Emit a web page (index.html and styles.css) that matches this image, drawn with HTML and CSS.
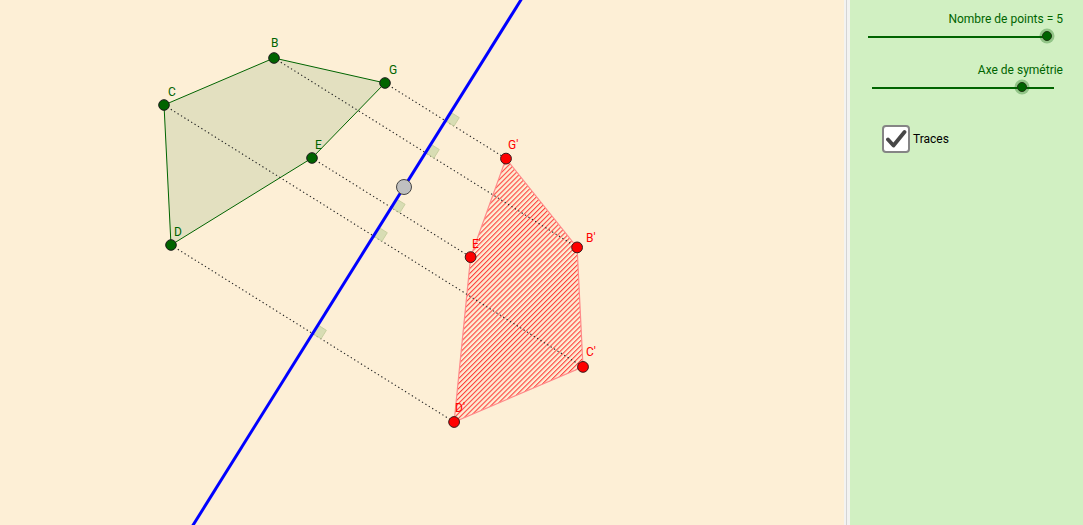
FILE: index.html
```html
<!DOCTYPE html>
<html lang="fr">
<head>
<meta charset="utf-8">
<title>Symétrie axiale</title>
<link rel="stylesheet" href="styles.css">
</head>
<body>
<div class="app">
  <div class="canvas">
    <svg class="geo" width="844" height="525" viewBox="0 0 844 525" xmlns="http://www.w3.org/2000/svg">
      <defs>
        <pattern id="hatch" width="3.5" height="10" patternUnits="userSpaceOnUse" patternTransform="rotate(45)">
          <line x1="0.6" y1="-1" x2="0.6" y2="11" stroke="#ff1a1a" stroke-width="0.9"/>
        </pattern>
      </defs>
      <!-- original polygon -->
      <polygon points="164,105 274,58 385,83 312,158 171,245" fill="#006400" fill-opacity="0.1" stroke="#006400" stroke-width="1"/>
      <!-- image polygon -->
      <polygon points="506,158.6 577.1,247.4 583,366.9 454.1,422 470.6,257.1" fill="url(#hatch)" stroke="#ff8a8a" stroke-width="1.2"/>
      <!-- perpendicular dotted lines -->
      <g stroke="#222" stroke-width="1.1" stroke-dasharray="1.3 2.7" fill="none">
        <line x1="274" y1="58" x2="577.1" y2="247.4"/>
        <line x1="385" y1="83" x2="506" y2="158.6"/>
        <line x1="164" y1="105" x2="583" y2="366.9"/>
        <line x1="312" y1="158" x2="470.6" y2="257.1"/>
        <line x1="171" y1="245" x2="454.1" y2="422"/>
      </g>
      <!-- right-angle markers -->
      <g fill="#d6dbb2" fill-opacity="0.95" stroke="#c0ca98" stroke-width="0.8">
        <polygon points="445.5,120.8 450.8,112.3 459.3,117.6 454.0,126.1"/>
        <polygon points="425.5,152.7 430.8,144.2 439.3,149.5 434.0,158.0"/>
        <polygon points="391.3,207.5 396.6,199.0 405.1,204.3 399.8,212.8"/>
        <polygon points="373.5,235.9 378.8,227.4 387.3,232.7 382.0,241.2"/>
        <polygon points="312.6,333.5 317.9,325.0 326.4,330.3 321.1,338.8"/>
      </g>
      <!-- axis -->
      <line x1="521.5" y1="-1" x2="192.5" y2="526" stroke="#0000ff" stroke-width="3"/>
      <circle cx="404" cy="187" r="7.5" fill="#c0c0c0" stroke="#444" stroke-width="1"/>
      <!-- original points -->
      <g fill="#006400" stroke="#1a1a1a" stroke-width="1">
        <circle cx="274" cy="58" r="5.3"/>
        <circle cx="385" cy="83" r="5.3"/>
        <circle cx="164" cy="105" r="5.3"/>
        <circle cx="312" cy="158" r="5.3"/>
        <circle cx="171" cy="245" r="5.3"/>
      </g>
      <!-- image points -->
      <g fill="#ff0000" stroke="#3a1a1a" stroke-width="1">
        <circle cx="506" cy="158.6" r="5.4"/>
        <circle cx="577.1" cy="247.4" r="5.4"/>
        <circle cx="470.6" cy="257.1" r="5.4"/>
        <circle cx="583" cy="366.9" r="5.4"/>
        <circle cx="454.1" cy="422" r="5.4"/>
      </g>
      <g class="lbl-green">
        <text x="271" y="47">B</text>
        <text x="389" y="74">G</text>
        <text x="168" y="96">C</text>
        <text x="315" y="149">E</text>
        <text x="174" y="236">D</text>
      </g>
      <g class="lbl-red">
        <text x="508" y="149">G'</text>
        <text x="586" y="242">B'</text>
        <text x="472" y="248">E'</text>
        <text x="586" y="356">C'</text>
        <text x="455" y="412">D'</text>
      </g>
    </svg>
  </div>
  <div class="divider"><span class="divider-line"></span></div>
  <div class="panel">
    <div class="slider-label">Nombre de points = 5</div>
    <div class="slider slider-one">
      <div class="track"></div>
      <div class="handle handle-end"></div>
    </div>
    <div class="slider-label second">Axe de symétrie</div>
    <div class="slider slider-two">
      <div class="track"></div>
      <div class="handle handle-mid"></div>
    </div>
    <label class="check-row">
      <span class="checkbox">
        <svg width="22" height="20" viewBox="0 0 22 20"><path d="M3 10.5 L8.5 16.5 L19.5 3" fill="none" stroke="#474747" stroke-width="3.8" stroke-linecap="round" stroke-linejoin="round"/></svg>
      </span>
      <span class="check-text">Traces</span>
    </label>
  </div>
</div>
</body>
</html>
```

FILE: styles.css
```css
html, body {
  margin: 0;
  padding: 0;
  overflow: hidden;
}
body {
  width: 1083px;
  height: 525px;
  font-family: Roboto, "Liberation Sans", sans-serif;
}
.app {
  display: flex;
  width: 1083px;
  height: 525px;
}
.canvas {
  width: 844px;
  height: 525px;
  background: #fdefd6;
  flex: none;
}
.geo {
  display: block;
}
.lbl-green text {
  fill: #006400;
  font-family: Roboto, "Liberation Sans", sans-serif;
  font-size: 12px;
}
.lbl-red text {
  fill: #ff0000;
  font-family: Roboto, "Liberation Sans", sans-serif;
  font-size: 12px;
}
.divider {
  width: 6px;
  flex: none;
  background: #f3f3f1;
  display: flex;
  padding-left: 2px;
  box-sizing: border-box;
}
.divider-line {
  width: 1px;
  background: #d4d4d4;
}
.panel {
  flex: 1;
  background: #d1f0c2;
  display: flex;
  flex-direction: column;
  padding-top: 12px;
}
.slider-label {
  font-size: 12px;
  line-height: 14px;
  color: #006400;
  text-align: right;
  padding-right: 20px;
}
.slider-label.second {
  margin-top: 15px;
}
.slider {
  position: relative;
  height: 22px;
}
.slider-one {
  margin-left: 18px;
  width: 179px;
}
.slider-two {
  margin-left: 22px;
  width: 182px;
}
.track {
  position: absolute;
  left: 0;
  right: 0;
  top: 10px;
  height: 2px;
  background: #006400;
}
.handle {
  position: absolute;
  top: 5px;
  width: 8px;
  height: 8px;
  border-radius: 50%;
  background: #006400;
  border: 1px solid #1d3a12;
  box-shadow: 0 0 0 2.5px rgba(0, 100, 0, 0.3);
}
.handle-end {
  left: 174px;
}
.handle-mid {
  left: 145px;
}
.check-row {
  display: flex;
  align-items: center;
  margin-top: 26px;
  margin-left: 32px;
  gap: 3px;
}
.checkbox {
  width: 24px;
  height: 24px;
  border: 2px solid #858585;
  border-radius: 4px;
  background: #ffffff;
  display: flex;
  align-items: center;
  justify-content: center;
}
.checkbox svg {
  display: block;
}
.check-text {
  font-size: 12px;
  color: #000;
}
```
